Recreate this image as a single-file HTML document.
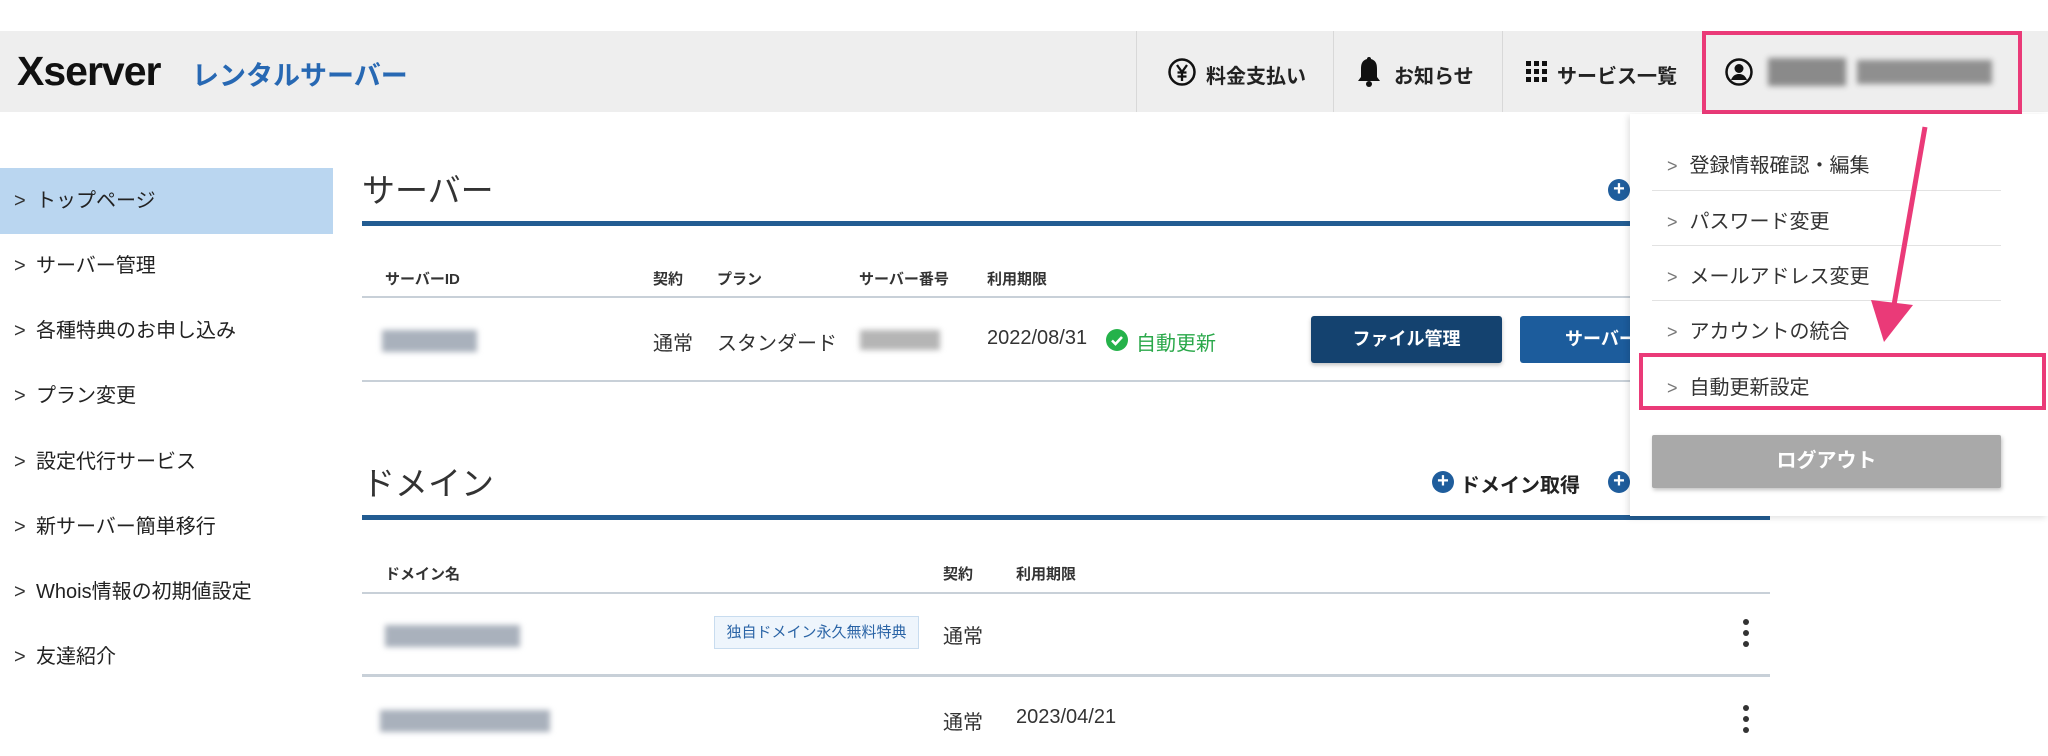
<!DOCTYPE html>
<html><head><meta charset="utf-8">
<style>
*{margin:0;padding:0;box-sizing:border-box}
body{width:2048px;height:756px;background:#fff;position:relative;overflow:hidden;font-family:"Liberation Sans","Noto Sans CJK JP",sans-serif;color:#222}
.a{position:absolute;white-space:nowrap}
.hdr{left:0;top:31px;width:2048px;height:81px;background:#eeeeee}
.div{top:31px;width:1px;height:81px;background:#d8d8d8}
.hi{font-size:20px;font-weight:bold;color:#222;top:60px}
.nav{left:0;width:333px;height:66px;font-size:20px;line-height:66px;padding-left:14px;color:#222}
.nav .c{display:inline-block;width:22px;color:#333}
.th{font-size:15px;font-weight:bold;color:#333}
.td{font-size:20px;color:#333}
.hr{height:2px;background:#c8d0d8}
.blur{background:#a9b1bc;filter:blur(3px)}
.dd{font-size:20px;color:#333}
.dd .c{color:#777;margin-right:12px;font-size:18px}
.dl{left:1652px;width:349px;height:1px;background:#e2e2e2}
.plus{width:22px;height:22px;border-radius:50%;background:#1f5d9c;color:#fff;font-weight:bold;font-size:20px;line-height:21px;text-align:center}
.kb{width:6px;height:6px;border-radius:50%;background:#333}
</style></head><body>
<div class="a hdr"></div>
<div class="a" style="left:17px;top:51px;font-size:41px;line-height:41px;font-weight:bold;letter-spacing:-1px;color:#111">Xserver</div>
<div class="a" style="left:192px;top:54px;font-size:27px;font-weight:bold;color:#2768b3">レンタルサーバー</div>
<div class="a div" style="left:1136px"></div>
<div class="a div" style="left:1333px"></div>
<div class="a div" style="left:1502px"></div>
<svg class="a" style="left:1167px;top:57px" width="30" height="30" viewBox="0 0 30 30"><circle cx="15" cy="15" r="12.5" fill="none" stroke="#111" stroke-width="2.5"/><path d="M10 8l5 7 5-7M15 15v9M10.5 15.5h9M10.5 19.5h9" fill="none" stroke="#111" stroke-width="2.3"/></svg>
<div class="a hi" style="left:1206px">料金支払い</div>
<svg class="a" style="left:1356px;top:55px" width="26" height="34" viewBox="0 0 26 34"><path d="M13 2c-1.5 0-2 1-2 2C6 5.5 5 9 5 14v8l-3 4h22l-3-4v-8c0-5-1-8.5-6-10 0-1-.5-2-2-2z" fill="#111"/><circle cx="13" cy="29" r="3" fill="#111"/></svg>
<div class="a hi" style="left:1394px">お知らせ</div>
<svg class="a" style="left:1526px;top:61px" width="22" height="22" viewBox="0 0 22 22" fill="#111"><rect x="0" y="0" width="5" height="5"/><rect x="8" y="0" width="5" height="5"/><rect x="16" y="0" width="5" height="5"/><rect x="0" y="8" width="5" height="5"/><rect x="8" y="8" width="5" height="5"/><rect x="16" y="8" width="5" height="5"/><rect x="0" y="16" width="5" height="5"/><rect x="8" y="16" width="5" height="5"/><rect x="16" y="16" width="5" height="5"/></svg>
<div class="a hi" style="left:1557px">サービス一覧</div>
<div class="a" style="left:1702px;top:31px;width:320px;height:83px;border:4px solid #ea3a78;background:#eeeeee"></div>
<svg class="a" style="left:1724px;top:57px" width="30" height="30" viewBox="0 0 30 30"><circle cx="15" cy="15" r="12.5" fill="none" stroke="#111" stroke-width="2.5"/><circle cx="15" cy="11.5" r="4.5" fill="#111"/><path d="M7 23c2-5 5-6 8-6s6 1 8 6" fill="#111"/></svg>
<div class="a blur" style="left:1768px;top:58px;width:78px;height:28px;background:#8a8a8a"></div>
<div class="a blur" style="left:1857px;top:60px;width:135px;height:24px;background:#8f8f8f"></div>

<div class="a nav" style="top:168px;background:#bad6f0"><span class="c">&gt;</span>トップページ</div>
<div class="a nav" style="top:233px"><span class="c">&gt;</span>サーバー管理</div>
<div class="a nav" style="top:298px"><span class="c">&gt;</span>各種特典のお申し込み</div>
<div class="a nav" style="top:363px"><span class="c">&gt;</span>プラン変更</div>
<div class="a nav" style="top:429px"><span class="c">&gt;</span>設定代行サービス</div>
<div class="a nav" style="top:494px"><span class="c">&gt;</span>新サーバー簡単移行</div>
<div class="a nav" style="top:559px"><span class="c">&gt;</span>Whois情報の初期値設定</div>
<div class="a nav" style="top:624px"><span class="c">&gt;</span>友達紹介</div>

<div class="a" style="left:362px;top:164px;font-size:33px;color:#333">サーバー</div>
<div class="plus a" style="left:1608px;top:179px">+</div>
<div class="a" style="left:362px;top:221px;width:1408px;height:5px;background:#225c92"></div>
<div class="a th" style="left:385px;top:268px">サーバーID</div>
<div class="a th" style="left:653px;top:268px">契約</div>
<div class="a th" style="left:717px;top:268px">プラン</div>
<div class="a th" style="left:859px;top:268px">サーバー番号</div>
<div class="a th" style="left:987px;top:268px">利用期限</div>
<div class="a hr" style="left:362px;top:296px;width:1408px"></div>
<div class="a blur" style="left:382px;top:330px;width:95px;height:22px"></div>
<div class="a td" style="left:653px;top:327px">通常</div>
<div class="a td" style="left:717px;top:327px">スタンダード</div>
<div class="a blur" style="left:860px;top:330px;width:80px;height:20px;background:#b5b5b5"></div>
<div class="a td" style="left:987px;top:327px">2022/08/31</div>
<svg class="a" style="left:1105px;top:328px" width="24" height="24" viewBox="0 0 24 24"><circle cx="12" cy="12" r="11" fill="#25b24a"/><path d="M7 12.5l3.5 3.5 6.5-7" fill="none" stroke="#fff" stroke-width="2.6"/></svg>
<div class="a td" style="left:1136px;top:327px;color:#2aa84a">自動更新</div>
<div class="a" style="left:1311px;top:316px;width:191px;height:47px;background:#14426f;border-radius:3px;box-shadow:0 2px 4px rgba(0,0,0,.25);color:#fff;font-weight:bold;font-size:18px;text-align:center;line-height:47px">ファイル管理</div>
<div class="a" style="left:1520px;top:316px;width:191px;height:47px;background:#1c5c9c;border-radius:3px;color:#fff;font-weight:bold;font-size:18px;line-height:47px;padding-left:45px">サーバー管理</div>
<div class="a hr" style="left:362px;top:380px;width:1408px"></div>

<div class="a" style="left:362px;top:457px;font-size:33px;color:#333">ドメイン</div>
<div class="plus a" style="left:1432px;top:471px">+</div>
<div class="a" style="left:1460px;top:469px;font-size:20px;font-weight:bold;color:#222">ドメイン取得</div>
<div class="plus a" style="left:1608px;top:471px">+</div>
<div class="a" style="left:362px;top:515px;width:1408px;height:5px;background:#225c92"></div>
<div class="a th" style="left:385px;top:563px">ドメイン名</div>
<div class="a th" style="left:943px;top:563px">契約</div>
<div class="a th" style="left:1016px;top:563px">利用期限</div>
<div class="a hr" style="left:362px;top:592px;width:1408px"></div>
<div class="a blur" style="left:385px;top:625px;width:135px;height:22px"></div>
<div class="a" style="left:714px;top:616px;width:205px;height:33px;background:#eef5fc;border:1px solid #c8dcef;color:#2a64a6;font-size:15px;line-height:31px;text-align:center">独自ドメイン永久無料特典</div>
<div class="a td" style="left:943px;top:620px">通常</div>
<div class="a kb" style="left:1743px;top:619px"></div><div class="a kb" style="left:1743px;top:630px"></div><div class="a kb" style="left:1743px;top:641px"></div>
<div class="a hr" style="left:362px;top:674px;width:1408px;height:3px"></div>
<div class="a blur" style="left:380px;top:710px;width:170px;height:22px"></div>
<div class="a td" style="left:943px;top:706px">通常</div>
<div class="a td" style="left:1016px;top:706px">2023/04/21</div>
<div class="a kb" style="left:1743px;top:705px"></div><div class="a kb" style="left:1743px;top:716px"></div><div class="a kb" style="left:1743px;top:727px"></div>

<div class="a" style="left:1630px;top:114px;width:418px;height:402px;background:#fff;box-shadow:-2px 2px 6px rgba(0,0,0,.12)"></div>
<div class="a dd" style="left:1667px;top:149px"><span class="c">&gt;</span>登録情報確認・編集</div>
<div class="a dl" style="top:190px"></div>
<div class="a dd" style="left:1667px;top:205px"><span class="c">&gt;</span>パスワード変更</div>
<div class="a dl" style="top:245px"></div>
<div class="a dd" style="left:1667px;top:260px"><span class="c">&gt;</span>メールアドレス変更</div>
<div class="a dl" style="top:300px"></div>
<div class="a dd" style="left:1667px;top:315px"><span class="c">&gt;</span>アカウントの統合</div>
<div class="a" style="left:1639px;top:353px;width:407px;height:57px;border:4px solid #ea3a78"></div>
<div class="a dd" style="left:1667px;top:371px"><span class="c">&gt;</span>自動更新設定</div>
<div class="a" style="left:1652px;top:435px;width:349px;height:53px;background:#a9a9a9;border-radius:2px;box-shadow:1px 2px 4px rgba(0,0,0,.25);color:#fff;font-weight:bold;font-size:20px;text-align:center;line-height:53px">ログアウト</div>
<svg class="a" style="left:0;top:0" width="2048" height="756"><path d="M1925 127L1894 305" stroke="#ea3a78" stroke-width="5" fill="none"/><path d="M1871 300L1884 342L1913 305Z" fill="#ea3a78"/></svg>
</body></html>
